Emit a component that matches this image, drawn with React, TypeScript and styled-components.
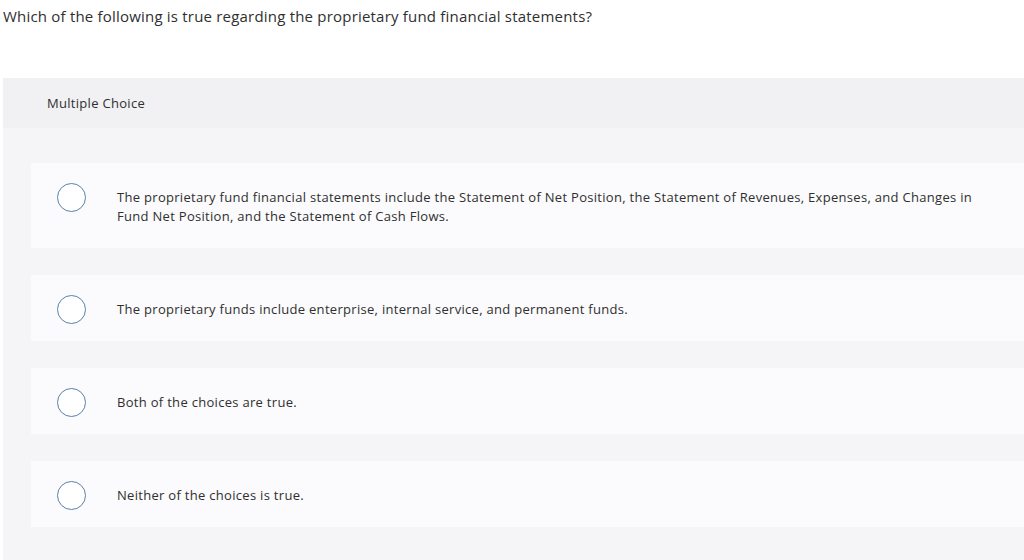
import { createGlobalStyle } from "styled-components";
import styled from "styled-components";

const choices = [
  "The proprietary fund financial statements include the Statement of Net Position, the Statement of Revenues, Expenses, and Changes in Fund Net Position, and the Statement of Cash Flows.",
  "The proprietary funds include enterprise, internal service, and permanent funds.",
  "Both of the choices are true.",
  "Neither of the choices is true.",
];

const GlobalStyle = createGlobalStyle`
  html, body {
    margin: 0;
    padding: 0;
    background: #ffffff;
    overflow: hidden;
  }
  body {
    font-family: "Open Sans", "Lato", sans-serif;
    color: #333333;
  }
`;

export default function App() {
  return (
    <>
      <GlobalStyle />
      <Page>
        <Question>
          Which of the following is true regarding the proprietary fund financial statements?
        </Question>
        <Panel>
          <PanelHeader>Multiple Choice</PanelHeader>
          <ChoiceList>
            {choices.map((text, i) => (
              <ChoiceCard key={i}>
                <Radio />
                <ChoiceText>{text}</ChoiceText>
              </ChoiceCard>
            ))}
          </ChoiceList>
        </Panel>
      </Page>
    </>
  );
}

const Page = styled.div`
  width: 1024px;
  overflow: hidden;
  padding-top: 6px;
`;

const Question = styled.div`
  padding-left: 3px;
  font-size: 15px;
  letter-spacing: 0.2px;
  line-height: 20px;
  color: #2f2f2f;
  margin-bottom: 52px;
`;

const Panel = styled.div`
  margin-left: 3px;
  background: #f5f5f7;
  padding-bottom: 40px;
`;

const PanelHeader = styled.div`
  height: 50px;
  display: flex;
  align-items: center;
  padding-left: 44px;
  background: #f1f0f2;
  font-size: 13px;
  letter-spacing: 0.3px;
  color: #2f2f2f;
`;

const ChoiceList = styled.div`
  display: flex;
  flex-direction: column;
  gap: 27px;
  padding: 35px 0 0 28px;
`;

const ChoiceCard = styled.div`
  display: flex;
  align-items: flex-start;
  background: #fbfbfd;
  padding: 25px 20px 22px 26px;
`;

const Radio = styled.div`
  flex: none;
  width: 29px;
  height: 29px;
  box-sizing: border-box;
  border: 1.5px solid #5b80a8;
  border-radius: 50%;
  background: #ffffff;
  margin: -5px 31px -5px 0;
`;

const ChoiceText = styled.div`
  width: 870px;
  font-size: 13px;
  letter-spacing: 0.3px;
  line-height: 19px;
  color: #2f2f2f;
`;
